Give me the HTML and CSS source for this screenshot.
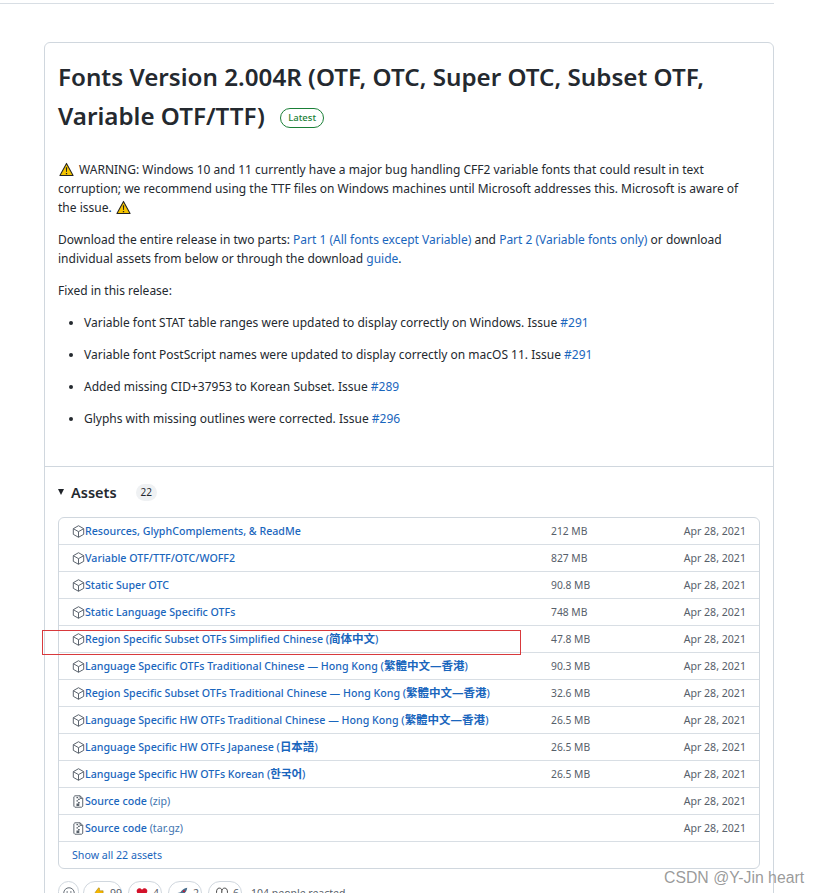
FILE: index.html
```html
<!DOCTYPE html>
<html lang="en">
<head>
    <meta charset="UTF-8">
    <meta name="viewport" content="width=device-width, initial-scale=1.0">
    <title>Fonts Version 2.004R</title>
    <link rel="stylesheet" href="styles.css">
</head>
<body>
    <svg class="icon-defs" width="0" height="0">
        <symbol id="pkg" viewBox="0 0 16 16">
            <path fill="none" stroke="currentColor" stroke-width="1.2" stroke-linejoin="round" d="M8 .9l6.4 3.6v7L8 15.1l-6.4-3.6v-7zM1.800 4.600L8 8.200l6.200-3.600M8 8.200v6.800"/>
        </symbol>
        <symbol id="zip" viewBox="0 0 16 16">
            <path fill="none" stroke="currentColor" stroke-width="1.2" stroke-linejoin="round" d="M3.5 1h6.5l3.2 3.2v9.6l-1.2 1.2H3.5l-1.2-1.2V2.2zM10 1v3.2h3.2"/>
            <path fill="currentColor" d="M5.5 2.5h2v1.6h-2zM7.5 4.5h2v1.6h-2zM5.5 6.5h2v1.6h-2zM7.5 8.5h2v1.6h-2zM5.5 10.5h3.5v3h-3.5z"/>
        </symbol>
        <symbol id="warn" viewBox="0 0 16 16">
            <path fill="#f5c400" stroke="#222" stroke-width="1.1" stroke-linejoin="round" d="M8 1.5l7 13H1z"/>
            <path fill="#222" d="M7.3 5.5h1.4l-.3 5.2h-.8zM7.3 11.6h1.4v1.4H7.3z"/>
        </symbol>
    </svg>

    <div class="page">
        <div class="top-rule"></div>

        <section class="release">
            <div class="release-body">
                <h1 class="title">Fonts Version 2.004R (OTF, OTC, Super OTC, Subset OTF, Variable OTF/TTF) <span class="badge">Latest</span></h1>

                <div class="notes">
                    <p><svg class="warn"><use href="#warn"/></svg> WARNING: Windows 10 and 11 currently have a major bug handling CFF2 variable fonts that could result in text corruption; we recommend using the TTF files on Windows machines until Microsoft addresses this. Microsoft is aware of the issue. <svg class="warn"><use href="#warn"/></svg></p>
                    <p>Download the entire release in two parts: <a href="#">Part 1 (All fonts except Variable)</a> and <a href="#">Part 2 (Variable fonts only)</a> or download individual assets from below or through the download <a href="#">guide</a>.</p>
                    <p>Fixed in this release:</p>
                    <ul>
                        <li>Variable font STAT table ranges were updated to display correctly on Windows. Issue <a href="#">#291</a></li>
                        <li>Variable font PostScript names were updated to display correctly on macOS 11. Issue <a href="#">#291</a></li>
                        <li>Added missing CID+37953 to Korean Subset. Issue <a href="#">#289</a></li>
                        <li>Glyphs with missing outlines were corrected. Issue <a href="#">#296</a></li>
                    </ul>
                </div>
            </div>

            <div class="assets">
                <div class="assets-head">
                    <span class="caret"></span>
                    <span class="assets-title">Assets</span>
                    <span class="counter">22</span>
                </div>

                <div class="asset-list">
                    <div class="asset-row">
                        <a class="asset-name" href="#"><svg class="asset-icon"><use href="#pkg"/></svg><b>Resources, GlyphComplements, &amp; ReadMe</b></a>
                        <span class="asset-size">212 MB</span><span class="asset-date">Apr 28, 2021</span>
                    </div>
                    <div class="asset-row">
                        <a class="asset-name" href="#"><svg class="asset-icon"><use href="#pkg"/></svg><b>Variable OTF/TTF/OTC/WOFF2</b></a>
                        <span class="asset-size">827 MB</span><span class="asset-date">Apr 28, 2021</span>
                    </div>
                    <div class="asset-row">
                        <a class="asset-name" href="#"><svg class="asset-icon"><use href="#pkg"/></svg><b>Static Super OTC</b></a>
                        <span class="asset-size">90.8 MB</span><span class="asset-date">Apr 28, 2021</span>
                    </div>
                    <div class="asset-row">
                        <a class="asset-name" href="#"><svg class="asset-icon"><use href="#pkg"/></svg><b>Static Language Specific OTFs</b></a>
                        <span class="asset-size">748 MB</span><span class="asset-date">Apr 28, 2021</span>
                    </div>
                    <div class="asset-row">
                        <a class="asset-name" href="#"><svg class="asset-icon"><use href="#pkg"/></svg><b>Region Specific Subset OTFs Simplified Chinese (<span class="cjk">简体中文</span>)</b></a>
                        <span class="asset-size">47.8 MB</span><span class="asset-date">Apr 28, 2021</span>
                    </div>
                    <div class="asset-row">
                        <a class="asset-name" href="#"><svg class="asset-icon"><use href="#pkg"/></svg><b>Language Specific OTFs Traditional Chinese — Hong Kong (<span class="cjk">繁體中文—香港</span>)</b></a>
                        <span class="asset-size">90.3 MB</span><span class="asset-date">Apr 28, 2021</span>
                    </div>
                    <div class="asset-row">
                        <a class="asset-name" href="#"><svg class="asset-icon"><use href="#pkg"/></svg><b>Region Specific Subset OTFs Traditional Chinese — Hong Kong (<span class="cjk">繁體中文—香港</span>)</b></a>
                        <span class="asset-size">32.6 MB</span><span class="asset-date">Apr 28, 2021</span>
                    </div>
                    <div class="asset-row">
                        <a class="asset-name" href="#"><svg class="asset-icon"><use href="#pkg"/></svg><b>Language Specific HW OTFs Traditional Chinese — Hong Kong (<span class="cjk">繁體中文—香港</span>)</b></a>
                        <span class="asset-size">26.5 MB</span><span class="asset-date">Apr 28, 2021</span>
                    </div>
                    <div class="asset-row">
                        <a class="asset-name" href="#"><svg class="asset-icon"><use href="#pkg"/></svg><b>Language Specific HW OTFs Japanese (<span class="cjk">日本語</span>)</b></a>
                        <span class="asset-size">26.5 MB</span><span class="asset-date">Apr 28, 2021</span>
                    </div>
                    <div class="asset-row">
                        <a class="asset-name" href="#"><svg class="asset-icon"><use href="#pkg"/></svg><b>Language Specific HW OTFs Korean (<span class="cjk">한국어</span>)</b></a>
                        <span class="asset-size">26.5 MB</span><span class="asset-date">Apr 28, 2021</span>
                    </div>
                    <div class="asset-row">
                        <a class="asset-name" href="#"><svg class="asset-icon"><use href="#zip"/></svg><b>Source code</b>&nbsp;<span class="light">(zip)</span></a>
                        <span class="asset-size"></span><span class="asset-date">Apr 28, 2021</span>
                    </div>
                    <div class="asset-row">
                        <a class="asset-name" href="#"><svg class="asset-icon"><use href="#zip"/></svg><b>Source code</b>&nbsp;<span class="light">(tar.gz)</span></a>
                        <span class="asset-size"></span><span class="asset-date">Apr 28, 2021</span>
                    </div>
                    <div class="asset-row show-all"><a href="#">Show all 22 assets</a></div>
                </div>

                <div class="reactions">
                    <span class="smiley">
                        <svg class="react-icon" viewBox="0 0 16 16"><circle cx="8" cy="8" r="7" fill="none" stroke="#57606a" stroke-width="1.2"/><circle cx="5.5" cy="6.5" r="1" fill="#57606a"/><circle cx="10.5" cy="6.5" r="1" fill="#57606a"/></svg>
                    </span>
                    <span class="pill pill-thumb">
                        <svg class="react-icon" viewBox="0 0 16 16"><path fill="#f5b700" stroke="#8a6a00" stroke-width=".6" d="M7.5 1c1.500 0 1.500 2 1 4h5v9H3V7z"/></svg>99
                    </span>
                    <span class="pill pill-heart">
                        <svg class="react-icon" viewBox="0 0 16 16"><path fill="#d3122a" d="M8 15L1.5 7.5C0 5 1.5 1.5 4.5 1.5 6 1.5 7.3 2.3 8 3.5c.7-1.200 2-2 3.500-2 3 0 4.500 3.500 3 6z"/></svg>4
                    </span>
                    <span class="pill pill-rocket">
                        <svg class="react-icon" viewBox="0 0 16 16"><path fill="#4a6d8c" d="M15 1c-4 .5-7 2.500-9 6l-4 1 1 2 3 3 2 1 1-4c3.500-2 5.500-5 6-9z"/><circle cx="10.500" cy="5.500" r="1.300" fill="#d3122a"/></svg>2
                    </span>
                    <span class="pill pill-eyes">
                        <svg class="react-icon" viewBox="0 0 16 16"><ellipse cx="4.500" cy="7" rx="3.800" ry="5.500" fill="#fff" stroke="#333" stroke-width="1.200"/><ellipse cx="11.500" cy="7" rx="3.800" ry="5.500" fill="#fff" stroke="#333" stroke-width="1.200"/></svg>6
                    </span>
                    <span class="react-text">104 people reacted</span>
                </div>
            </div>
        </section>
    </div>

    <div class="redbox"></div>
    <div class="watermark">CSDN @Y-Jin heart</div>
</body>
</html>
```

FILE: styles.css
```css
* {
    margin: 0;
    padding: 0;
    box-sizing: border-box;
}

html, body {
    height: 893px;
    overflow: hidden;
}

body {
    font-family: "Noto Sans", "Noto Sans CJK SC", sans-serif;
    font-size: 12px;
    line-height: 19px;
    color: #24292f;
    background: #fff;
    position: relative;
}

a {
    color: #1a66bd;
    text-decoration: none;
}

.icon-defs {
    position: absolute;
}

.page {
    width: 774px;
    padding-top: 3px;
}

.top-rule {
    height: 1px;
    background: #d8dee4;
    margin-bottom: 38px;
}

.release {
    margin-left: 44px;
    border: 1px solid #d0d7de;
    border-radius: 6px;
    height: 900px;
}

.release-body {
    padding: 14px 13px 0;
    height: 424px;
    border-bottom: 1px solid #d0d7de;
}

.title {
    font-size: 24.2px;
    line-height: 39px;
    font-weight: 600;
    margin-bottom: 25px;
}

.badge {
    display: inline-block;
    vertical-align: 4px;
    margin-left: 9px;
    padding: 0 7px;
    font-size: 9.5px;
    line-height: 18px;
    font-weight: 500;
    color: #1a7f37;
    border: 1px solid #1a7f37;
    border-radius: 10px;
}

.warn {
    width: 15px;
    height: 15px;
    vertical-align: -3px;
    margin: 0 2px 0 1px;
}

.notes {
    padding-right: 6px;
}

.notes p {
    margin-bottom: 13px;
}

.notes ul {
    padding-left: 26px;
}

.notes li {
    margin-bottom: 13px;
}

.assets {
    padding: 15px 13px 0;
}

.assets-head {
    display: flex;
    align-items: center;
    height: 20px;
    margin-bottom: 15px;
}

.caret {
    width: 0;
    height: 0;
    border-left: 3.5px solid transparent;
    border-right: 3.5px solid transparent;
    border-top: 6px solid #1f2328;
    margin-right: 7px;
}

.assets-title {
    font-size: 14.5px;
    font-weight: 600;
}

.counter {
    margin-left: 19px;
    padding: 0 5px;
    font-size: 10px;
    line-height: 17px;
    border-radius: 10px;
    background: #eff1f3;
}

.asset-list {
    width: 702px;
    border: 1px solid #d0d7de;
    border-radius: 6px;
}

.asset-row {
    display: flex;
    align-items: center;
    height: 27px;
    padding-left: 13px;
    border-bottom: 1px solid #d8dee4;
    font-size: 10.65px;
}

.asset-row:last-child {
    border-bottom: 0;
    height: 26px;
}

.asset-name {
    display: flex;
    align-items: center;
    width: 478px;
    white-space: nowrap;
}

.asset-name b {
    font-weight: 500;
}

.cjk {
    font-size: 11.5px;
    font-weight: 700;
}

.light {
    font-weight: 400;
    color: #3f74b0;
}

.asset-icon {
    width: 13px;
    height: 13px;
    color: #57606a;
    flex: none;
}

.asset-size {
    width: 100px;
    margin-left: -13px;
    padding-left: 14px;
    font-size: 10.3px;
    color: #57606a;
}

.asset-date {
    width: 110px;
    text-align: right;
    font-size: 10.6px;
    color: #57606a;
    padding-right: 13px;
    margin-left: auto;
}

.reactions {
    display: flex;
    align-items: center;
    gap: 6px;
    margin-top: 12px;
    font-size: 10.5px;
    color: #57606a;
}

.smiley, .pill {
    display: flex;
    align-items: center;
    gap: 5px;
    border: 1px solid #d0d7de;
    border-radius: 12px;
    height: 24px;
    padding: 0 9px;
}

.smiley {
    width: 21px;
    justify-content: center;
    padding: 0;
    margin-right: -2px;
}

.pill-thumb {
    width: 39px;
}

.pill-heart, .pill-rocket, .pill-eyes {
    width: 34px;
    padding: 0 7px;
}

.react-text {
    margin-left: 3px;
}

.react-icon {
    width: 12px;
    height: 12px;
    flex: none;
}

.redbox {
    position: absolute;
    left: 42px;
    top: 630px;
    width: 479px;
    height: 25px;
    border: 1px solid #d8393c;
}

.watermark {
    position: absolute;
    left: 664px;
    top: 868px;
    font-family: "Liberation Sans", sans-serif;
    font-size: 15.8px;
    color: rgba(110, 110, 110, 0.7);
}
```
